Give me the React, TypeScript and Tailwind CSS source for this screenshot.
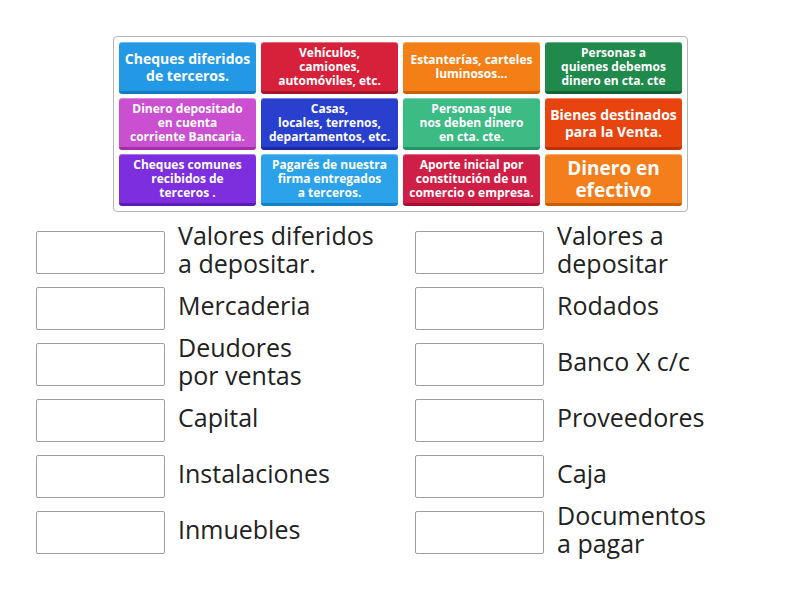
import React from "react";

type Tile = { text: string[]; bg: string; size?: string };

const tiles: Tile[] = [
  { text: ["Cheques diferidos", "de terceros."], bg: "bg-[#2399e6] border-[#1479c4]", size: "text-[14px] leading-[17px]" },
  { text: ["Vehículos,", "camiones,", "automóviles, etc."], bg: "bg-[#d7213a] border-[#a8142a]" },
  { text: ["Estanterías, carteles", "luminosos..."], bg: "bg-[#f57f17] border-[#c85f0a]" },
  { text: ["Personas a", "quienes debemos", "dinero en cta. cte"], bg: "bg-[#1f8a4c] border-[#136537]" },
  { text: ["Dinero depositado", "en cuenta", "corriente Bancaria."], bg: "bg-[#cb4fd1] border-[#a132a6]" },
  { text: ["Casas,", "locales, terrenos,", "departamentos, etc."], bg: "bg-[#2940cf] border-[#1b2aa0]" },
  { text: ["Personas que", "nos deben dinero", "en cta. cte."], bg: "bg-[#3cbb84] border-[#279263]" },
  { text: ["Bienes destinados", "para la Venta."], bg: "bg-[#e8440f] border-[#bb3006]", size: "text-[14px] leading-[17px]" },
  { text: ["Cheques comunes", "recibidos de", "terceros ."], bg: "bg-[#7d2fe0] border-[#5b1bb5]" },
  { text: ["Pagarés de nuestra", "firma entregados", "a terceros."], bg: "bg-[#2ba2ea] border-[#1680c6]" },
  { text: ["Aporte inicial por", "constitución de un", "comercio o empresa."], bg: "bg-[#cf1f46] border-[#a11232]" },
  { text: ["Dinero en", "efectivo"], bg: "bg-[#f47d1c] border-[#c75e0a]", size: "text-[19px] leading-[22px]" },
];

const left = [
  ["Valores diferidos", "a depositar."],
  ["Mercaderia"],
  ["Deudores", "por ventas"],
  ["Capital"],
  ["Instalaciones"],
  ["Inmuebles"],
];

const right = [
  ["Valores a", "depositar"],
  ["Rodados"],
  ["Banco X c/c"],
  ["Proveedores"],
  ["Caja"],
  ["Documentos", "a pagar"],
];

function Row({ lines }: { lines: string[] }) {
  return (
    <div className="flex items-center h-[43px]">
      <div className="w-[129px] h-[43px] shrink-0 border border-[#9e9e9e] rounded-[2px] bg-white" />
      <div className="ml-[13px] mb-[8px] text-[25px] leading-[28px] text-[#222]">
        {lines.map((l, i) => (
          <div key={i}>{l}</div>
        ))}
      </div>
    </div>
  );
}

export default function App() {
  return (
    <div className="w-[800px] h-[600px] bg-white" style={{ fontFamily: '"Open Sans", sans-serif' }}>
      <div className="pt-[36px] flex justify-center">
        <div className="ml-[1px] w-[575px] border border-[#b5b5b5] rounded-[4px] p-[5px] grid grid-cols-4 gap-x-[5px] gap-y-[4px]">
          {tiles.map((t, i) => (
            <div
              key={i}
              className={`h-[52px] rounded-[3px] border-b-[3px] ${t.bg} flex items-center justify-center text-center text-white font-bold shadow-[inset_0_1px_0_rgba(255,255,255,0.35)]`}
            >
              <div className={t.size ?? "text-[12px] leading-[14px]"}>
                {t.text.map((l, j) => (
                  <div key={j}>{l}</div>
                ))}
              </div>
            </div>
          ))}
        </div>
      </div>
      <div className="mt-[19px] pl-[36px] flex">
        <div className="w-[379px] flex flex-col gap-[13px]">
          {left.map((l, i) => (
            <Row key={i} lines={l} />
          ))}
        </div>
        <div className="flex flex-col gap-[13px]">
          {right.map((l, i) => (
            <Row key={i} lines={l} />
          ))}
        </div>
      </div>
    </div>
  );
}
